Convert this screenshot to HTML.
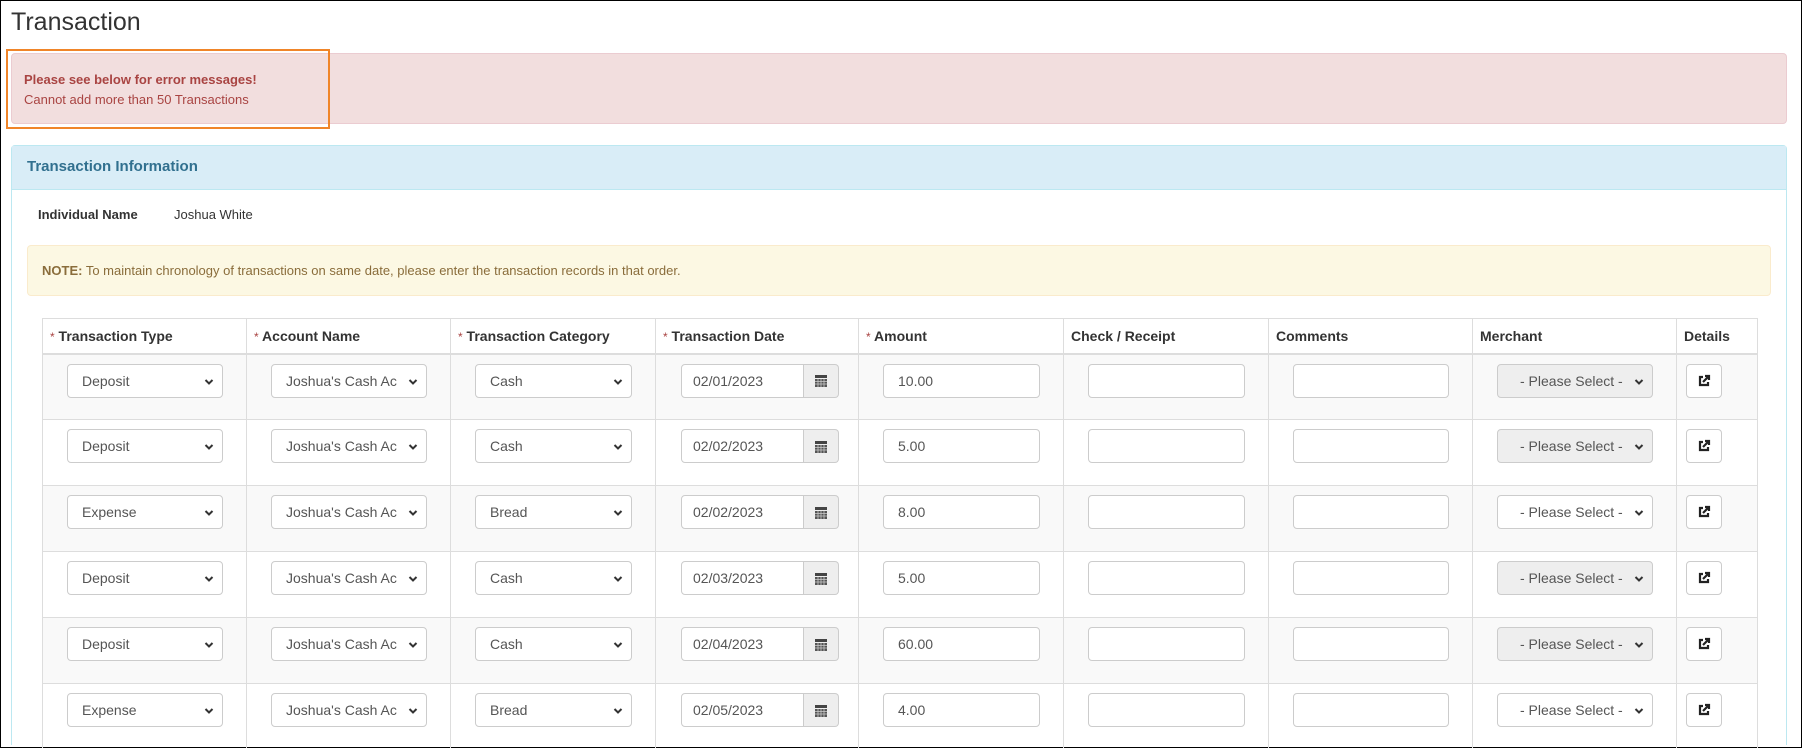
<!DOCTYPE html>
<html><head><meta charset="utf-8"><style>
*{box-sizing:border-box}
html,body{margin:0;padding:0;overflow:hidden}
body{width:1802px;height:748px;overflow:hidden;background:#fff;font-family:"Liberation Sans",Arial,sans-serif;color:#333;position:relative;border:1px solid #000}
.abs{position:absolute}
h1{position:absolute;left:10px;top:7px;margin:0;font-size:25px;font-weight:normal;color:#333}
.alert{left:10px;top:52px;width:1776px;height:71px;background:#f2dede;border:1px solid #ebccd1;border-radius:4px;color:#a94442;font-size:13px}
.orange{left:5px;top:48px;width:324px;height:80px;border:2px solid #f08529}
.panel{left:10px;top:144px;width:1776px;height:600px;border:1px solid #bce8f1;border-bottom:none;border-radius:4px 4px 0 0}
.ph{position:absolute;left:0;top:0;right:0;height:44px;background:#d9edf7;border-bottom:1px solid #bce8f1;color:#31708f;font-weight:bold;font-size:15px;padding:12px 15px}
.note{left:26px;top:244px;width:1744px;height:51px;background:#fcf8e3;border:1px solid #faebcc;border-radius:4px;color:#8a6d3b;font-size:13px;padding:17px 14px}
table{position:absolute;left:41px;top:317px;border-collapse:collapse;table-layout:fixed;width:1715px}
th{height:35px;border:1px solid #ddd;border-bottom:2px solid #ddd;text-align:left;font-size:14px;padding:0 7px;vertical-align:middle}
th .r{color:#a94442;font-weight:normal;font-size:12px}
td{height:66px;border:1px solid #ddd;padding:9px 23px 0 24px;vertical-align:top}
tr.o td{background:#f9f9f9}
.in{height:34px;border:1px solid #ccc;border-radius:4px;background:#fff;font-size:14px;color:#555;padding:8px 14px;position:relative;white-space:nowrap;overflow:hidden}
.sel svg{position:absolute;right:8px;top:13px}
.dis{background:#eee}
.date{display:flex;height:34px}
.date .t{flex:1;border:1px solid #ccc;border-radius:4px 0 0 4px;background:#fff;font-size:14px;color:#555;padding:8px 11px}
.date .a{width:35px;border:1px solid #ccc;border-left:none;border-radius:0 4px 4px 0;background:#eee;display:flex;align-items:center;justify-content:center}
.btn{width:36px;height:34px;border:1px solid #ccc;border-radius:4px;background:#fff;display:flex;align-items:center;justify-content:center}
</style></head><body>
<h1>Transaction</h1>
<div class="abs alert"><div style="position:absolute;left:12px;top:18px;font-weight:bold">Please see below for error messages!</div><div style="position:absolute;left:12px;top:38px">Cannot add more than 50 Transactions</div></div>
<div class="abs orange"></div>
<div class="abs panel"><div class="ph">Transaction Information</div></div>
<div class="abs" style="left:37px;top:206px;font-size:13px;font-weight:bold">Individual Name</div>
<div class="abs" style="left:173px;top:206px;font-size:13px">Joshua White</div>
<div class="abs note"><b>NOTE:</b> To maintain chronology of transactions on same date, please enter the transaction records in that order.</div>
<table>
<colgroup><col style="width:204px"><col style="width:204px"><col style="width:205px"><col style="width:203px"><col style="width:205px"><col style="width:205px"><col style="width:204px"><col style="width:204px"><col style="width:81px"></colgroup>
<tr><th><span class="r">*</span> Transaction Type</th><th><span class="r">*</span> Account Name</th><th><span class="r">*</span> Transaction Category</th><th><span class="r">*</span> Transaction Date</th><th><span class="r">*</span> Amount</th><th>Check / Receipt</th><th>Comments</th><th>Merchant</th><th>Details</th></tr>
<tr class="o"><td><div class="in sel">Deposit<svg width="10" height="8" viewBox="0 0 10 8"><path d="M1.5 2L5 5.5L8.5 2" stroke="#333" stroke-width="2" fill="none"/></svg></div></td><td><div class="in sel">Joshua's Cash Ac<svg width="10" height="8" viewBox="0 0 10 8"><path d="M1.5 2L5 5.5L8.5 2" stroke="#333" stroke-width="2" fill="none"/></svg></div></td><td><div class="in sel">Cash<svg width="10" height="8" viewBox="0 0 10 8"><path d="M1.5 2L5 5.5L8.5 2" stroke="#333" stroke-width="2" fill="none"/></svg></div></td><td style="padding-left:25px;padding-right:19px"><div class="date"><div class="t">02/01/2023</div><div class="a"><svg width="12" height="13" viewBox="0 0 12 13"><rect x="0" y="1" width="12" height="3" fill="#444"/><rect x="0" y="5" width="12" height="8" fill="#555"/><path d="M0 7.5h12M0 10h12M3 5v8M6 5v8M9 5v8" stroke="#ccc" stroke-width=".8"/></svg></div></div></td><td><div class="in">10.00</div></td><td><div class="in"></div></td><td><div class="in"></div></td><td><div class="in sel dis" style="padding-left:22px">- Please Select -<svg width="10" height="8" viewBox="0 0 10 8"><path d="M1.5 2L5 5.5L8.5 2" stroke="#333" stroke-width="2" fill="none"/></svg></div></td><td style="padding-left:9px"><div class="btn"><svg width="14" height="14" viewBox="0 0 14 14"><path d="M6 3H3v8h8V8" stroke="#222" stroke-width="2.2" fill="none"/><path d="M6 8L11 3M8 2h4v4" stroke="#222" stroke-width="2.2" fill="none"/></svg></div></td></tr>
<tr><td><div class="in sel">Deposit<svg width="10" height="8" viewBox="0 0 10 8"><path d="M1.5 2L5 5.5L8.5 2" stroke="#333" stroke-width="2" fill="none"/></svg></div></td><td><div class="in sel">Joshua's Cash Ac<svg width="10" height="8" viewBox="0 0 10 8"><path d="M1.5 2L5 5.5L8.5 2" stroke="#333" stroke-width="2" fill="none"/></svg></div></td><td><div class="in sel">Cash<svg width="10" height="8" viewBox="0 0 10 8"><path d="M1.5 2L5 5.5L8.5 2" stroke="#333" stroke-width="2" fill="none"/></svg></div></td><td style="padding-left:25px;padding-right:19px"><div class="date"><div class="t">02/02/2023</div><div class="a"><svg width="12" height="13" viewBox="0 0 12 13"><rect x="0" y="1" width="12" height="3" fill="#444"/><rect x="0" y="5" width="12" height="8" fill="#555"/><path d="M0 7.5h12M0 10h12M3 5v8M6 5v8M9 5v8" stroke="#ccc" stroke-width=".8"/></svg></div></div></td><td><div class="in">5.00</div></td><td><div class="in"></div></td><td><div class="in"></div></td><td><div class="in sel dis" style="padding-left:22px">- Please Select -<svg width="10" height="8" viewBox="0 0 10 8"><path d="M1.5 2L5 5.5L8.5 2" stroke="#333" stroke-width="2" fill="none"/></svg></div></td><td style="padding-left:9px"><div class="btn"><svg width="14" height="14" viewBox="0 0 14 14"><path d="M6 3H3v8h8V8" stroke="#222" stroke-width="2.2" fill="none"/><path d="M6 8L11 3M8 2h4v4" stroke="#222" stroke-width="2.2" fill="none"/></svg></div></td></tr>
<tr class="o"><td><div class="in sel">Expense<svg width="10" height="8" viewBox="0 0 10 8"><path d="M1.5 2L5 5.5L8.5 2" stroke="#333" stroke-width="2" fill="none"/></svg></div></td><td><div class="in sel">Joshua's Cash Ac<svg width="10" height="8" viewBox="0 0 10 8"><path d="M1.5 2L5 5.5L8.5 2" stroke="#333" stroke-width="2" fill="none"/></svg></div></td><td><div class="in sel">Bread<svg width="10" height="8" viewBox="0 0 10 8"><path d="M1.5 2L5 5.5L8.5 2" stroke="#333" stroke-width="2" fill="none"/></svg></div></td><td style="padding-left:25px;padding-right:19px"><div class="date"><div class="t">02/02/2023</div><div class="a"><svg width="12" height="13" viewBox="0 0 12 13"><rect x="0" y="1" width="12" height="3" fill="#444"/><rect x="0" y="5" width="12" height="8" fill="#555"/><path d="M0 7.5h12M0 10h12M3 5v8M6 5v8M9 5v8" stroke="#ccc" stroke-width=".8"/></svg></div></div></td><td><div class="in">8.00</div></td><td><div class="in"></div></td><td><div class="in"></div></td><td><div class="in sel" style="padding-left:22px">- Please Select -<svg width="10" height="8" viewBox="0 0 10 8"><path d="M1.5 2L5 5.5L8.5 2" stroke="#333" stroke-width="2" fill="none"/></svg></div></td><td style="padding-left:9px"><div class="btn"><svg width="14" height="14" viewBox="0 0 14 14"><path d="M6 3H3v8h8V8" stroke="#222" stroke-width="2.2" fill="none"/><path d="M6 8L11 3M8 2h4v4" stroke="#222" stroke-width="2.2" fill="none"/></svg></div></td></tr>
<tr><td><div class="in sel">Deposit<svg width="10" height="8" viewBox="0 0 10 8"><path d="M1.5 2L5 5.5L8.5 2" stroke="#333" stroke-width="2" fill="none"/></svg></div></td><td><div class="in sel">Joshua's Cash Ac<svg width="10" height="8" viewBox="0 0 10 8"><path d="M1.5 2L5 5.5L8.5 2" stroke="#333" stroke-width="2" fill="none"/></svg></div></td><td><div class="in sel">Cash<svg width="10" height="8" viewBox="0 0 10 8"><path d="M1.5 2L5 5.5L8.5 2" stroke="#333" stroke-width="2" fill="none"/></svg></div></td><td style="padding-left:25px;padding-right:19px"><div class="date"><div class="t">02/03/2023</div><div class="a"><svg width="12" height="13" viewBox="0 0 12 13"><rect x="0" y="1" width="12" height="3" fill="#444"/><rect x="0" y="5" width="12" height="8" fill="#555"/><path d="M0 7.5h12M0 10h12M3 5v8M6 5v8M9 5v8" stroke="#ccc" stroke-width=".8"/></svg></div></div></td><td><div class="in">5.00</div></td><td><div class="in"></div></td><td><div class="in"></div></td><td><div class="in sel dis" style="padding-left:22px">- Please Select -<svg width="10" height="8" viewBox="0 0 10 8"><path d="M1.5 2L5 5.5L8.5 2" stroke="#333" stroke-width="2" fill="none"/></svg></div></td><td style="padding-left:9px"><div class="btn"><svg width="14" height="14" viewBox="0 0 14 14"><path d="M6 3H3v8h8V8" stroke="#222" stroke-width="2.2" fill="none"/><path d="M6 8L11 3M8 2h4v4" stroke="#222" stroke-width="2.2" fill="none"/></svg></div></td></tr>
<tr class="o"><td><div class="in sel">Deposit<svg width="10" height="8" viewBox="0 0 10 8"><path d="M1.5 2L5 5.5L8.5 2" stroke="#333" stroke-width="2" fill="none"/></svg></div></td><td><div class="in sel">Joshua's Cash Ac<svg width="10" height="8" viewBox="0 0 10 8"><path d="M1.5 2L5 5.5L8.5 2" stroke="#333" stroke-width="2" fill="none"/></svg></div></td><td><div class="in sel">Cash<svg width="10" height="8" viewBox="0 0 10 8"><path d="M1.5 2L5 5.5L8.5 2" stroke="#333" stroke-width="2" fill="none"/></svg></div></td><td style="padding-left:25px;padding-right:19px"><div class="date"><div class="t">02/04/2023</div><div class="a"><svg width="12" height="13" viewBox="0 0 12 13"><rect x="0" y="1" width="12" height="3" fill="#444"/><rect x="0" y="5" width="12" height="8" fill="#555"/><path d="M0 7.5h12M0 10h12M3 5v8M6 5v8M9 5v8" stroke="#ccc" stroke-width=".8"/></svg></div></div></td><td><div class="in">60.00</div></td><td><div class="in"></div></td><td><div class="in"></div></td><td><div class="in sel dis" style="padding-left:22px">- Please Select -<svg width="10" height="8" viewBox="0 0 10 8"><path d="M1.5 2L5 5.5L8.5 2" stroke="#333" stroke-width="2" fill="none"/></svg></div></td><td style="padding-left:9px"><div class="btn"><svg width="14" height="14" viewBox="0 0 14 14"><path d="M6 3H3v8h8V8" stroke="#222" stroke-width="2.2" fill="none"/><path d="M6 8L11 3M8 2h4v4" stroke="#222" stroke-width="2.2" fill="none"/></svg></div></td></tr>
<tr><td><div class="in sel">Expense<svg width="10" height="8" viewBox="0 0 10 8"><path d="M1.5 2L5 5.5L8.5 2" stroke="#333" stroke-width="2" fill="none"/></svg></div></td><td><div class="in sel">Joshua's Cash Ac<svg width="10" height="8" viewBox="0 0 10 8"><path d="M1.5 2L5 5.5L8.5 2" stroke="#333" stroke-width="2" fill="none"/></svg></div></td><td><div class="in sel">Bread<svg width="10" height="8" viewBox="0 0 10 8"><path d="M1.5 2L5 5.5L8.5 2" stroke="#333" stroke-width="2" fill="none"/></svg></div></td><td style="padding-left:25px;padding-right:19px"><div class="date"><div class="t">02/05/2023</div><div class="a"><svg width="12" height="13" viewBox="0 0 12 13"><rect x="0" y="1" width="12" height="3" fill="#444"/><rect x="0" y="5" width="12" height="8" fill="#555"/><path d="M0 7.5h12M0 10h12M3 5v8M6 5v8M9 5v8" stroke="#ccc" stroke-width=".8"/></svg></div></div></td><td><div class="in">4.00</div></td><td><div class="in"></div></td><td><div class="in"></div></td><td><div class="in sel" style="padding-left:22px">- Please Select -<svg width="10" height="8" viewBox="0 0 10 8"><path d="M1.5 2L5 5.5L8.5 2" stroke="#333" stroke-width="2" fill="none"/></svg></div></td><td style="padding-left:9px"><div class="btn"><svg width="14" height="14" viewBox="0 0 14 14"><path d="M6 3H3v8h8V8" stroke="#222" stroke-width="2.2" fill="none"/><path d="M6 8L11 3M8 2h4v4" stroke="#222" stroke-width="2.2" fill="none"/></svg></div></td></tr>
</table>
</body></html>
